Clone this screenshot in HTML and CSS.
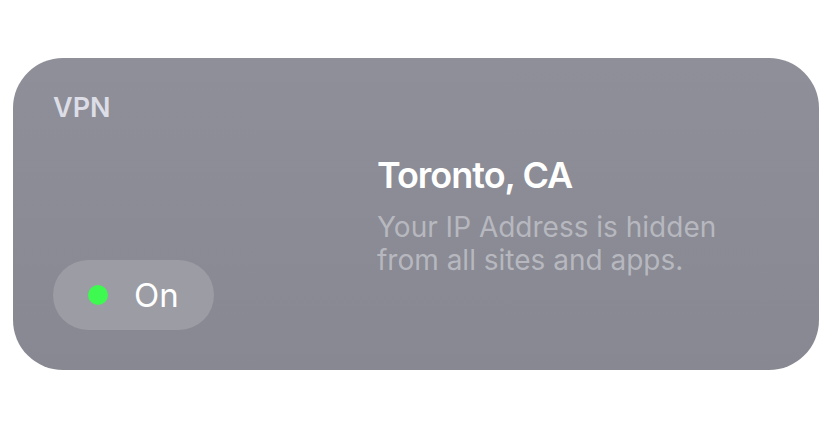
FILE: index.html
```html
<!DOCTYPE html>
<html lang="en">
<head>
<meta charset="UTF-8">
<meta name="viewport" content="width=device-width, initial-scale=1.0">
<title>VPN</title>
<link rel="stylesheet" href="styles.css">
</head>
<body>

<div class="widget">
  <div class="side">
    <div class="label">VPN</div>
    <div class="status">
      <span class="dot"></span>
      <span class="status-text">On</span>
    </div>
  </div>
  <div class="info">
    <div class="city">Toronto, CA</div>
    <p class="note">Your IP Address is hidden from all sites and apps.</p>
  </div>
</div>

</body>
</html>
```

FILE: styles.css
```css
body {
  margin: 0;
  background: #fff;
  font-family: Inter, "Noto Sans", sans-serif;
}

.widget {
  display: flex;
  margin: 58px 0 0 13px;
  width: 806px;
  height: 312px;
  box-sizing: border-box;
  border-radius: 50px;
  background: linear-gradient(180deg, #8e8f98 0%, #878891 100%);
  padding: 0 0 40px 40px;
}

.side {
  width: 324px;
  display: flex;
  flex-direction: column;
  justify-content: space-between;
}

.label {
  margin-top: 34px;
  font-size: 27px;
  font-weight: 600;
  color: #dcdde6;
  line-height: 32px;
}

.status {
  display: flex;
  align-items: center;
  width: 161px;
  height: 70px;
  box-sizing: border-box;
  padding-left: 35px;
  border-radius: 35px;
  background: #9b9ca4;
}

.dot {
  width: 20px;
  height: 20px;
  border-radius: 50%;
  background: #3ef94f;
}

.status-text {
  margin-left: 26px;
  font-size: 33px;
  color: #fff;
}

.info {
  padding-top: 95px;
}

.city {
  font-size: 36px;
  font-weight: 600;
  letter-spacing: -1px;
  color: #fff;
  line-height: 44px;
}

.note {
  margin: 14px 0 0;
  width: 360px;
  font-size: 28px;
  line-height: 33px;
  color: #b7b8bf;
}
```
